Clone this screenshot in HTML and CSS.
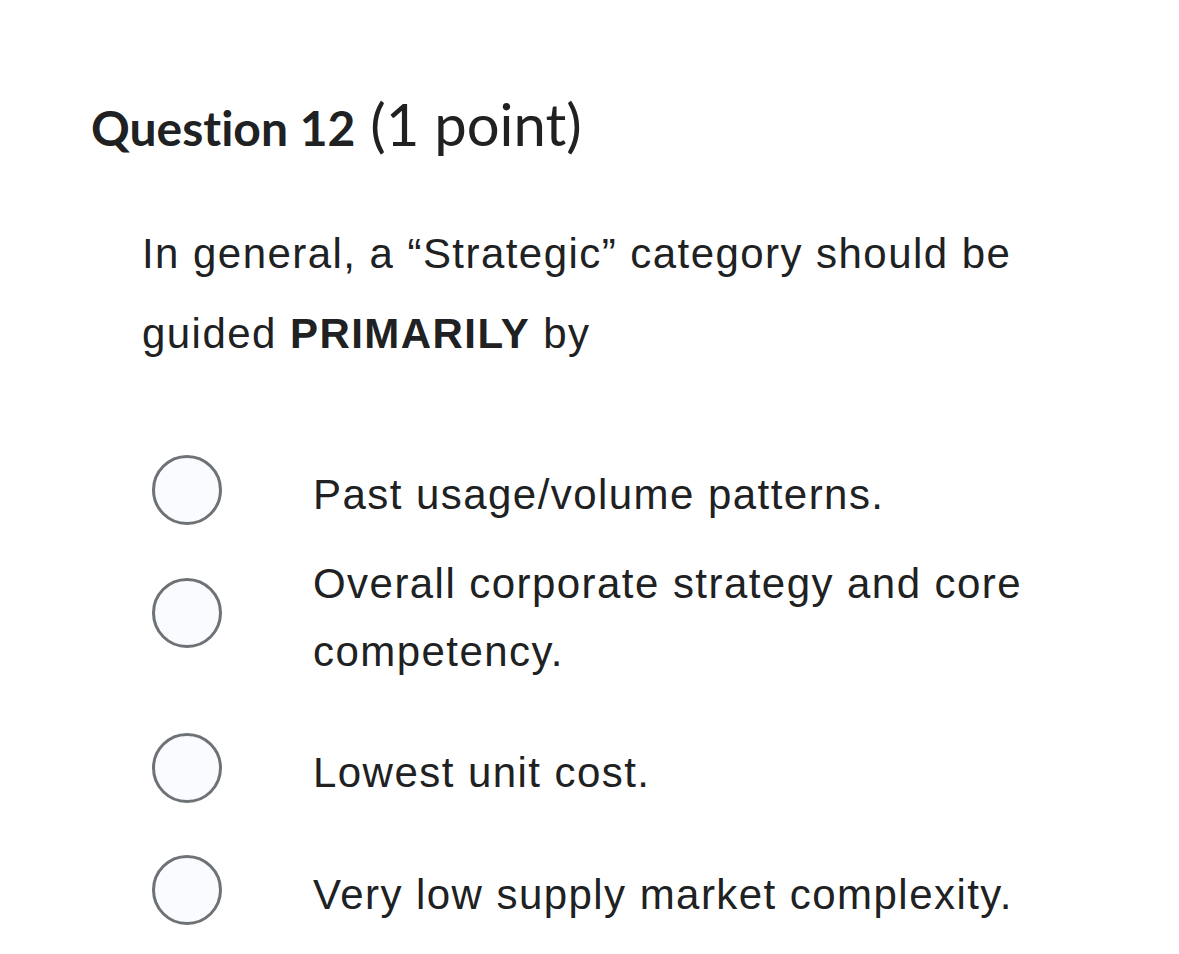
FILE: index.html
```html
<!DOCTYPE html>
<html lang="en">
<head>
<meta charset="utf-8">
<title>Question 12</title>
<link rel="stylesheet" href="styles.css">
</head>
<body>
<main class="quiz">
  <h2 class="q-title"><span class="q-num">Question 12</span> <span class="q-points">(1 point)</span></h2>
  <p class="q-text">In general, a “Strategic” category should be guided <strong>PRIMARILY</strong> by</p>
  <div class="options">
    <label class="option option-first">
      <span class="radio"></span>
      <span class="opt-text">Past usage/volume patterns.</span>
    </label>
    <label class="option">
      <span class="radio"></span>
      <span class="opt-text">Overall corporate strategy and core competency.</span>
    </label>
    <label class="option">
      <span class="radio"></span>
      <span class="opt-text">Lowest unit cost.</span>
    </label>
    <label class="option">
      <span class="radio"></span>
      <span class="opt-text">Very low supply market complexity.</span>
    </label>
  </div>
</main>
</body>
</html>
```

FILE: styles.css
```css
html, body {
  margin: 0;
  padding: 0;
  background: #ffffff;
}

.quiz {
  padding: 90px 0 0 91px;
  color: #202122;
}

.q-title {
  margin: 0;
  font-family: Lato, "Open Sans", sans-serif;
  font-size: 58px;
  line-height: 67px;
  font-weight: 400;
  font-variant-ligatures: none;
}

.q-num {
  font-size: 48px;
  font-weight: 700;
}

.q-points {
  font-weight: 400;
}

.q-text {
  margin: 53px 0 0 51px;
  width: 900px;
  font-family: "Liberation Sans", Arial, sans-serif;
  font-size: 42px;
  line-height: 80px;
  letter-spacing: 1.45px;
}

.q-text strong {
  font-weight: 700;
}

.options {
  margin: 86px 0 0 61px;
  display: flex;
  flex-direction: column;
  gap: 52px;
}

.option {
  display: flex;
  align-items: center;
  font-family: "Liberation Sans", Arial, sans-serif;
  font-size: 42px;
  line-height: 68px;
  letter-spacing: 1.45px;
}

.option-first {
  margin-bottom: -32px;
}

.radio {
  flex: none;
  box-sizing: border-box;
  width: 70px;
  height: 70px;
  margin: -5px 0 5px;
  border: 3px solid #6e7275;
  border-radius: 50%;
  background: #f9fbff;
}

.opt-text {
  margin-left: 91px;
  width: 775px;
}
```
